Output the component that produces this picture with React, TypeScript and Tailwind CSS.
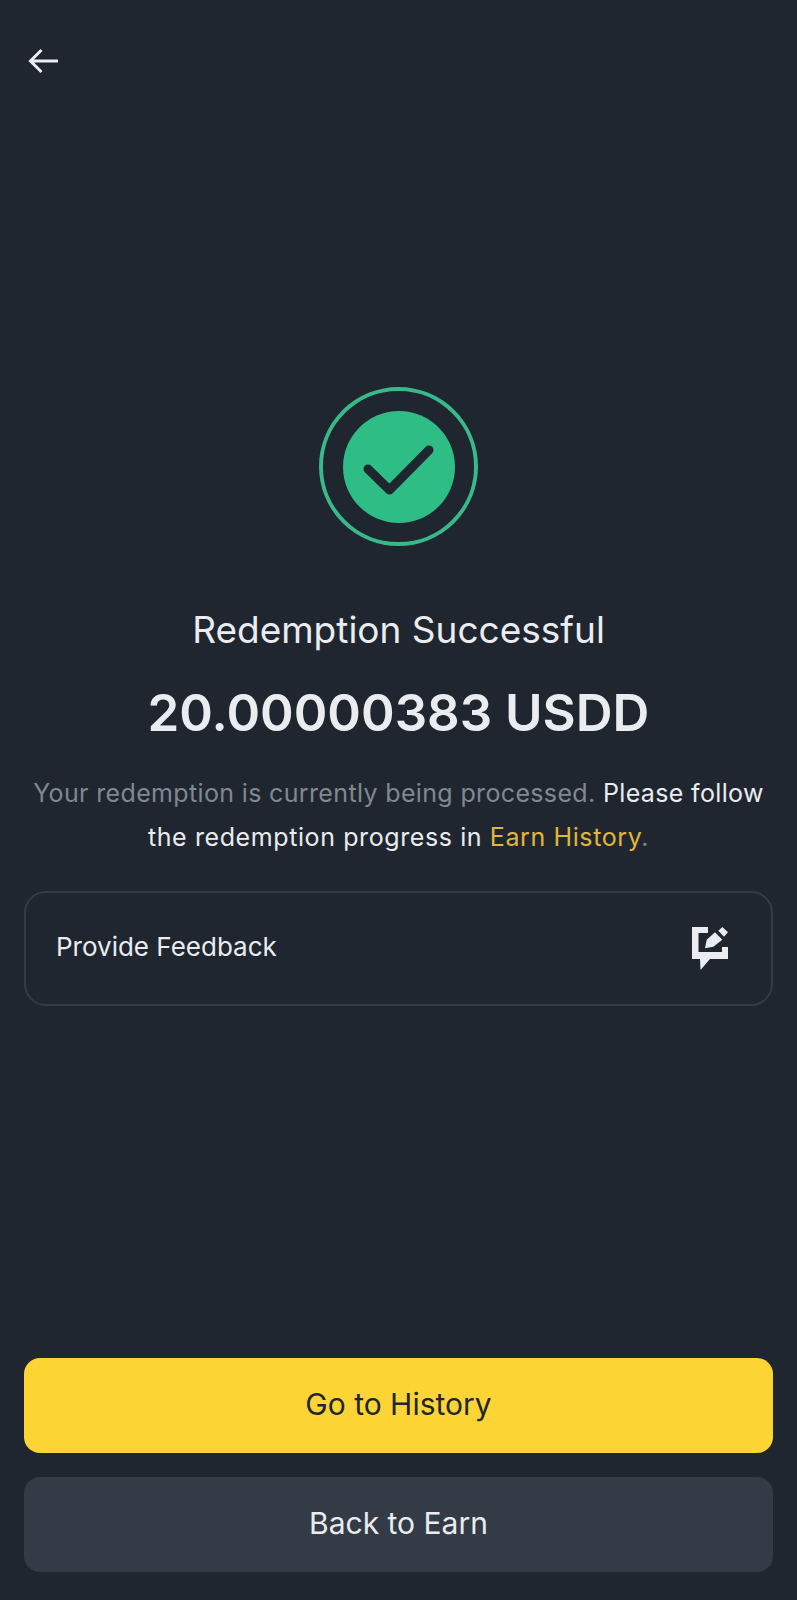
import React from "react";

export default function App() {
  return (
    <div className="w-[797px] h-[1600px] bg-[#1f2630] flex flex-col px-6 pb-7 [font-family:'Inter','Liberation_Sans',sans-serif] overflow-hidden">
      <div className="h-[48px] mt-[37px] flex items-center">
        <svg width="32" height="26" viewBox="0 0 32 26" fill="none" className="ml-[4px]">
          <path d="M30 13H3M13.5 2L2.5 13L13.5 24" stroke="#eaecef" strokeWidth="3" />
        </svg>
      </div>
      <div className="mt-[302px] flex justify-center">
        <div className="w-[159px] h-[159px] rounded-full border-4 border-[#37b98a] flex items-center justify-center">
          <div className="w-[112px] h-[112px] rounded-full bg-[#2ebd85] flex items-center justify-center">
            <svg width="72" height="64" viewBox="0 0 72 64" fill="none">
              <path d="M5 34L26.5 55L66 15" stroke="#1f2630" strokeWidth="9" strokeLinecap="round" strokeLinejoin="round" />
            </svg>
          </div>
        </div>
      </div>
      <h1 className="mt-[60px] text-center text-[37px] leading-[48px] font-normal text-[#eaecef]">Redemption Successful</h1>
      <div className="mt-[26px] text-center text-[51px] leading-[66px] font-semibold text-[#eaecef]">20.00000383 USDD</div>
      <div className="mt-[25px] -mx-2 text-center text-[25px] leading-[44px] text-[#808891]">
        <p className="tracking-[0.35px]">
          Your redemption is currently being processed. <span className="text-[#eaecef]">Please follow</span>
        </p>
        <p className="tracking-[0.6px]">
          <span className="text-[#eaecef]">the redemption progress in </span>
          <span className="text-[#e0b73a]">Earn History</span>.
        </p>
      </div>
      <div className="mt-[32px] h-[115px] rounded-[22px] border-2 border-[#333b47] flex items-center justify-between pl-[30px] pr-[43px]">
        <span className="text-[26px] leading-[32px] mb-[3px] text-[#eaecef]">Provide Feedback</span>
        <svg width="36" height="44" viewBox="0 0 36 44" fill="#eaecef">
          <path d="M0 0H16V6H6.5V25H30V20H36V32H18L8.5 43L8 32H0Z" />
          <path d="M13 21.3L14.7 12.7L23 5.3L30.3 12.7L21.3 19.7Z" />
          <path d="M26.3 3.7L30.3 0L36 5.3L32 9.7Z" />
        </svg>
      </div>
      <div className="flex-1" />
      <button className="h-[95px] pb-[2px] rounded-[16px] bg-[#fcd535] text-[30px] font-normal text-[#1f2630]">Go to History</button>
      <button className="mt-6 h-[95px] pb-[2px] rounded-[16px] bg-[#333b47] text-[30px] font-normal text-[#eaecef]">Back to Earn</button>
    </div>
  );
}
